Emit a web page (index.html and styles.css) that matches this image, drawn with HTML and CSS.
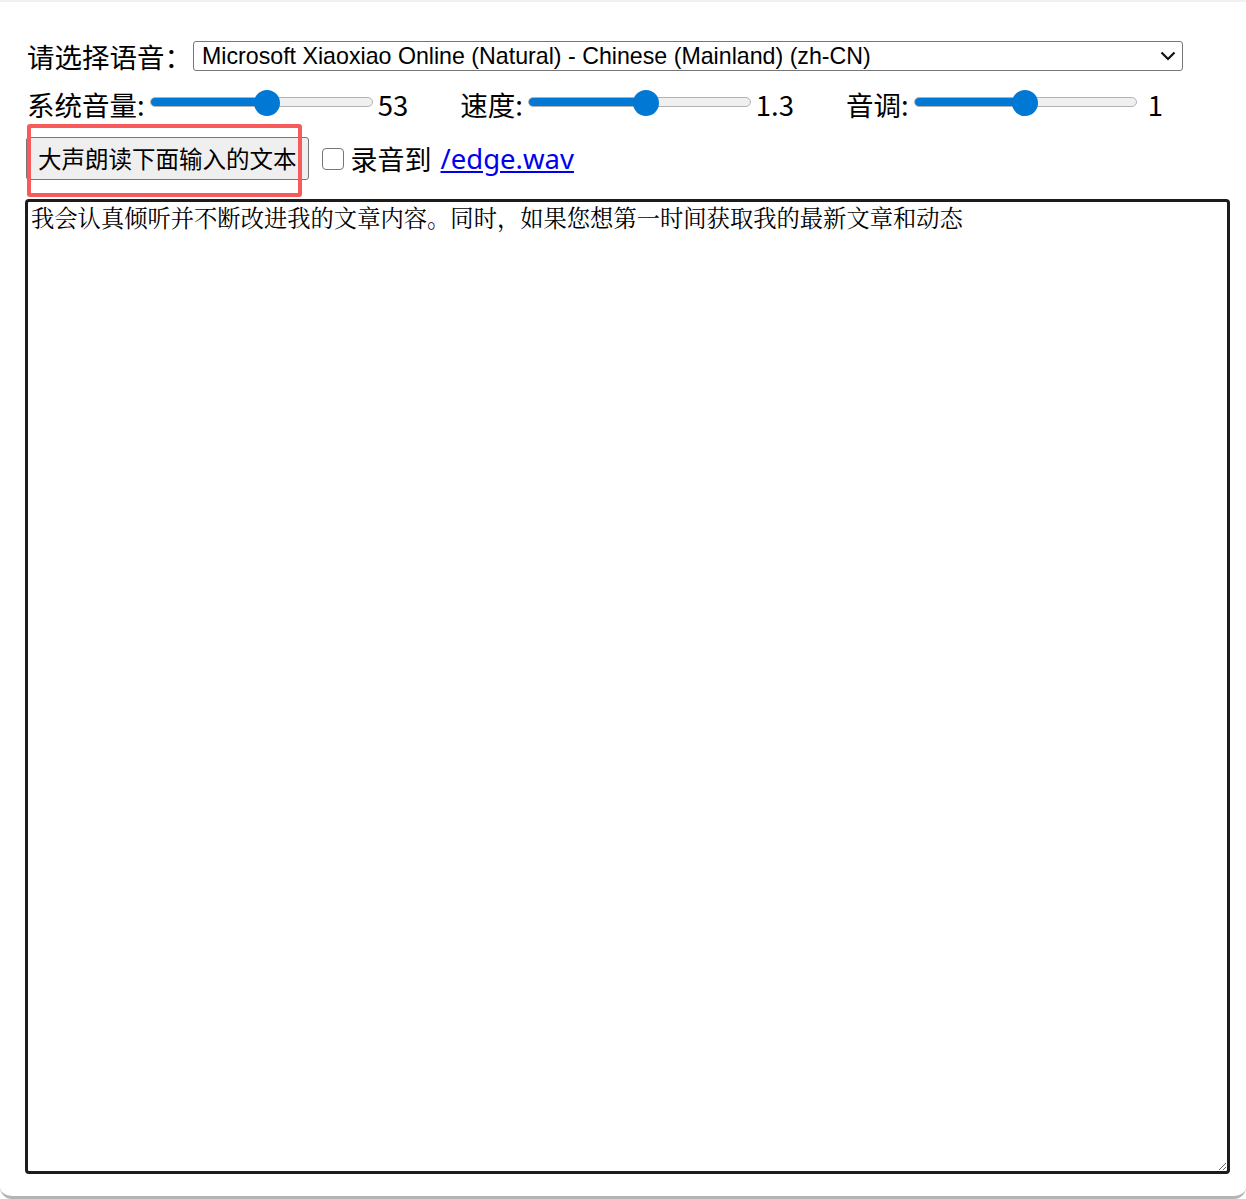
FILE: index.html
```html
<!DOCTYPE html>
<html lang="zh-CN">
<head>
<meta charset="utf-8">
<title>Edge TTS</title>
<link rel="stylesheet" href="styles.css">
</head>
<body>
<div class="frame">
  <div class="row row-voice">
    <label class="label" for="voice">请选择语音：</label>
    <div class="select-wrap">
      <select id="voice" class="select">
        <option>Microsoft Xiaoxiao Online (Natural) - Chinese (Mainland) (zh-CN)</option>
      </select>
      <svg class="chev" width="16" height="10" viewBox="0 0 16 10"><path d="M1.5 1.5 L8 8 L14.5 1.5" fill="none" stroke="#111" stroke-width="2.2"/></svg>
    </div>
  </div>

  <div class="row row-sliders">
    <div class="group">
      <span class="label">系统音量:</span>
      <input class="range" type="range" min="0" max="100" value="53" style="--p:117px">
      <span class="value">53</span>
    </div>
    <div class="group">
      <span class="label">速度:</span>
      <input class="range" type="range" min="0.5" max="2" step="0.1" value="1.3" style="--p:120px">
      <span class="value">1.3</span>
    </div>
    <div class="group">
      <span class="label">音调:</span>
      <input class="range" type="range" min="0" max="2" step="0.1" value="1" style="--p:112px">
      <span class="value value-wide">1</span>
    </div>
  </div>

  <div class="row row-actions">
    <button class="btn" type="button">大声朗读下面输入的文本</button>
    <span class="highlight"></span>
    <input class="check" type="checkbox" id="rec">
    <label class="label rec-label" for="rec">录音到</label>
    <a class="link" href="#">/edge.wav</a>
  </div>

  <textarea class="text">我会认真倾听并不断改进我的文章内容。同时，如果您想第一时间获取我的最新文章和动态</textarea>
</div>
</body>
</html>
```

FILE: styles.css
```css
html, body {
  margin: 0;
  padding: 0;
  background: #ffffff;
}

.frame {
  position: relative;
  box-sizing: border-box;
  height: 1199px;
  width: 1246px;
  border-top: 2px solid #f0f0f0;
  border-bottom: 3px solid #b4b4b4;
  border-radius: 0 0 12px 12px;
  padding-top: 39px;
  font-family: "Noto Sans CJK SC", "Noto Sans", sans-serif;
  color: #000;
}

.row {
  display: flex;
  align-items: center;
  padding-left: 27px;
}

.label {
  font-size: 27.5px;
  line-height: 30px;
  white-space: nowrap;
}

/* row 1 */
.row-voice {
  height: 30px;
  gap: 1px;
}

.select-wrap {
  position: relative;
  display: flex;
}

.select {
  -webkit-appearance: none;
  appearance: none;
  box-sizing: border-box;
  width: 990px;
  height: 30px;
  margin: 0;
  padding: 0 30px 0 8px;
  border: 1px solid #767676;
  border-radius: 3px;
  background: #fff;
  color: #000;
  font-family: "Liberation Sans", Arial, sans-serif;
  font-size: 23.2px;
  line-height: 28px;
}

.chev {
  position: absolute;
  right: 7px;
  top: 10px;
  pointer-events: none;
}

/* row 2 */
.row-sliders {
  margin-top: 17px;
  height: 32px;
  gap: 52px;
}

.group {
  display: flex;
  align-items: center;
}

.range {
  -webkit-appearance: none;
  appearance: none;
  width: 223px;
  height: 26px;
  margin: -4px 0 0 5px;
  padding: 0;
  background: transparent;
}

.range::-webkit-slider-runnable-track {
  height: 10px;
  border: 1px solid #b3b3b3;
  border-radius: 6px;
  background: linear-gradient(to right, #0078d4 var(--p), #efefef var(--p));
}

.range::-webkit-slider-thumb {
  -webkit-appearance: none;
  appearance: none;
  width: 26px;
  height: 26px;
  margin-top: -8px;
  border: none;
  border-radius: 50%;
  background: #0078d4;
}

.value {
  font-size: 27.5px;
  line-height: 30px;
  margin-left: 5px;
}

.value-wide {
  margin-left: 11px;
}

/* row 3 */
.row-actions {
  position: relative;
  margin-top: 17px;
  height: 43px;
  padding-left: 26px;
}

.btn {
  box-sizing: border-box;
  height: 43px;
  margin: 0;
  padding: 0 11px;
  border: 1px solid #767676;
  border-radius: 3px;
  background: #efefef;
  color: #000;
  font-family: "Noto Sans CJK SC", sans-serif;
  font-size: 23.5px;
  line-height: 41px;
}

.highlight {
  position: absolute;
  left: 27px;
  top: -13px;
  width: 275px;
  height: 73px;
  box-sizing: border-box;
  border: 4px solid #f65a5a;
  border-radius: 3px;
  pointer-events: none;
}

.check {
  -webkit-appearance: none;
  appearance: none;
  box-sizing: border-box;
  width: 22px;
  height: 22px;
  margin: 0 7px 0 13px;
  border: 1.5px solid #767676;
  border-radius: 4px;
  background: #fff;
}

.rec-label {
  font-size: 27px;
}

.link {
  margin-left: 9px;
  font-family: "Noto Sans", sans-serif;
  font-size: 27.5px;
  line-height: 30px;
  color: #0000ee;
  text-decoration: underline;
}

/* textarea */
.text {
  display: block;
  box-sizing: border-box;
  width: 1205px;
  height: 975px;
  margin: 19px 0 0 25px;
  padding: 0 3px;
  border: 3px solid #1c1c1c;
  border-radius: 4px;
  font-family: "Noto Serif CJK SC", "Noto Sans CJK SC", serif;
  font-size: 23.3px;
  line-height: 30px;
  color: #000;
  background: #fff;
  outline: none;
}
```
